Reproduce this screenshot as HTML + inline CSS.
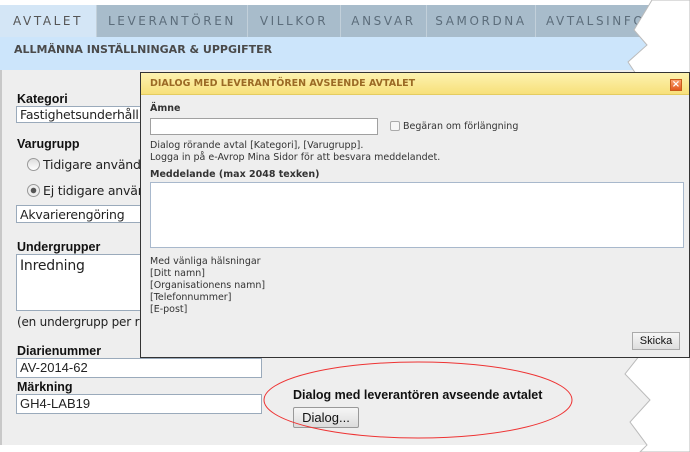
<!DOCTYPE html>
<html><head><meta charset="utf-8"><style>
*{margin:0;padding:0;box-sizing:border-box}
body{width:690px;height:452px;position:relative;overflow:hidden;background:#fff;font-family:"DejaVu Sans",Verdana,sans-serif}
.a{position:absolute}
.main{left:0;top:5px;width:660px;height:440px;background:#eeeeee;border-left:2px solid #c8c8c8}
.tabs{left:0;top:5px;width:660px;height:32px;background:#a8bccb}
.tab{position:absolute;top:5px;height:32px;line-height:32px;font-size:12px;letter-spacing:2.6px;color:#5c6d7b;text-align:center;border-right:1px solid #c2d0da}
.sub{left:0;top:37px;width:660px;height:33px;background:#cce5fb;font-size:11px;font-weight:bold;color:#4a4a4a;padding:6px 0 0 14px}
.lb{font-family:"Liberation Sans",Arial,sans-serif;font-weight:bold;font-size:12.5px;color:#111}
.in{background:#fff;border:1px solid #9aaabb;font-size:12.5px;letter-spacing:-0.2px;color:#222;padding:1px 3px;white-space:nowrap;overflow:hidden}
.ar{font-family:"Liberation Sans",Arial,sans-serif;letter-spacing:0}
.dlg{left:140px;top:72px;width:550px;height:286px;background:#eeeeee;border:1px solid #333}
.ttl{left:0;top:0;width:548px;height:22px;background:linear-gradient(#fdf2b0,#f7e07a);border-bottom:1px solid #e4cc60;font-size:9.5px;font-weight:bold;color:#9b6a25;padding:5px 0 0 9px}
.d{font-size:9.5px;color:#333}
.t{font-size:12.5px;letter-spacing:-0.2px;color:#222;white-space:nowrap}
</style></head><body>
<div class="a main"></div>
<div class="a tabs"></div>
<div class="tab" style="left:0;width:97px;background:#d4e6f6;color:#555">AVTALET</div>
<div class="tab" style="left:97px;width:151px">LEVERANTÖREN</div>
<div class="tab" style="left:248px;width:93px">VILLKOR</div>
<div class="tab" style="left:341px;width:86px">ANSVAR</div>
<div class="tab" style="left:427px;width:109px">SAMORDNA</div>
<div class="tab" style="left:536px;width:124px;text-align:left;padding-left:10px;border:none">AVTALSINFO</div>
<div class="a sub">ALLMÄNNA INSTÄLLNINGAR &amp; UPPGIFTER</div>
<svg class="a" style="left:0;top:0" width="690" height="452"><polygon fill="#fff" stroke="#bbb" stroke-width="1" points="652,0 634,30 647,45 628,62 640,80 628,100 640,120 628,140 640,160 628,180 640,200 628,220 640,240 628,260 640,280 628,300 640,320 628,340 640,355 625,374 650,400 630,422 647,445 640,452 690,452 690,0"/></svg>

<div class="a lb" style="left:17px;top:92px">Kategori</div>
<div class="a in" style="left:16px;top:106px;width:140px;height:17px;line-height:14px">Fastighetsunderhåll</div>
<div class="a lb" style="left:17px;top:137px">Varugrupp</div>
<div class="a" style="left:27px;top:158px;width:13px;height:13px;border-radius:50%;border:1px solid #999;background:linear-gradient(#ddd,#fff)"></div>
<div class="a t" style="left:43px;top:157px">Tidigare använda</div>
<div class="a" style="left:27px;top:184px;width:13px;height:13px;border-radius:50%;border:1px solid #999;background:radial-gradient(#555 0 2.5px,#eee 3px)"></div>
<div class="a t" style="left:43px;top:183px">Ej tidigare använ</div>
<div class="a in" style="left:16px;top:205px;width:140px;height:18px;line-height:15px">Akvarierengöring</div>
<div class="a lb" style="left:17px;top:240px">Undergrupper</div>
<div class="a in" style="left:16px;top:254px;width:140px;height:57px;font-size:14px;padding:3px">Inredning</div>
<div class="a t" style="left:17px;top:315px;font-size:12px">(en undergrupp per ra</div>
<div class="a lb" style="left:17px;top:344px">Diarienummer</div>
<div class="a in ar" style="left:16px;top:358px;width:246px;height:20px;line-height:16px;font-size:13px">AV-2014-62</div>
<div class="a lb" style="left:17px;top:380px">Märkning</div>
<div class="a in ar" style="left:16px;top:394px;width:246px;height:20px;line-height:16px;font-size:13px">GH4-LAB19</div>
<div class="a lb" style="left:293px;top:388px">Dialog med leverantören avseende avtalet</div>
<div class="a ar" style="left:293px;top:407px;width:66px;height:21px;border:1px solid #999;border-radius:2px;background:linear-gradient(#f6f6f6,#dcdcdc);font-size:13px;text-align:center;line-height:19px;color:#111">Dialog...</div>
<svg class="a" style="left:0;top:0" width="690" height="452"><ellipse cx="418" cy="400" rx="154" ry="38" fill="none" stroke="#e33" stroke-width="1"/></svg>

<div class="a dlg">
<div class="a ttl">DIALOG MED LEVERANTÖREN AVSEENDE AVTALET</div>
<div class="a" style="left:529px;top:6px;width:12px;height:12px;border:1px solid #c85a1a;background:linear-gradient(#f9a070,#e2581e);color:#fff;font-size:10px;line-height:10px;text-align:center;font-weight:bold">×</div>
<div class="a d" style="left:9px;top:30px;font-weight:bold">Ämne</div>
<div class="a" style="left:9px;top:45px;width:228px;height:17px;background:#fff;border:1px solid #a0a0a0"></div>
<div class="a" style="left:249px;top:48px;width:10px;height:10px;border:1px solid #aaa;border-radius:2px;background:#f6f6f6"></div>
<div class="a d" style="left:262px;top:48px">Begäran om förlängning</div>
<div class="a d" style="left:9px;top:67px;line-height:12px">Dialog rörande avtal [Kategori], [Varugrupp].<br>Logga in på e-Avrop Mina Sidor för att besvara meddelandet.</div>
<div class="a d" style="left:9px;top:96px;font-weight:bold">Meddelande (max 2048 texken)</div>
<div class="a" style="left:9px;top:109px;width:534px;height:66px;background:#fff;border:1px solid #a8b8cc"></div>
<div class="a d" style="left:9px;top:183px;line-height:12px">Med vänliga hälsningar<br>[Ditt namn]<br>[Organisationens namn]<br>[Telefonnummer]<br>[E-post]</div>
<div class="a ar" style="left:491px;top:259px;width:48px;height:18px;border:1px solid #aaa;background:linear-gradient(#f6f6f6,#dedede);font-size:11px;text-align:center;line-height:16px;color:#111">Skicka</div>
</div>
</body></html>
